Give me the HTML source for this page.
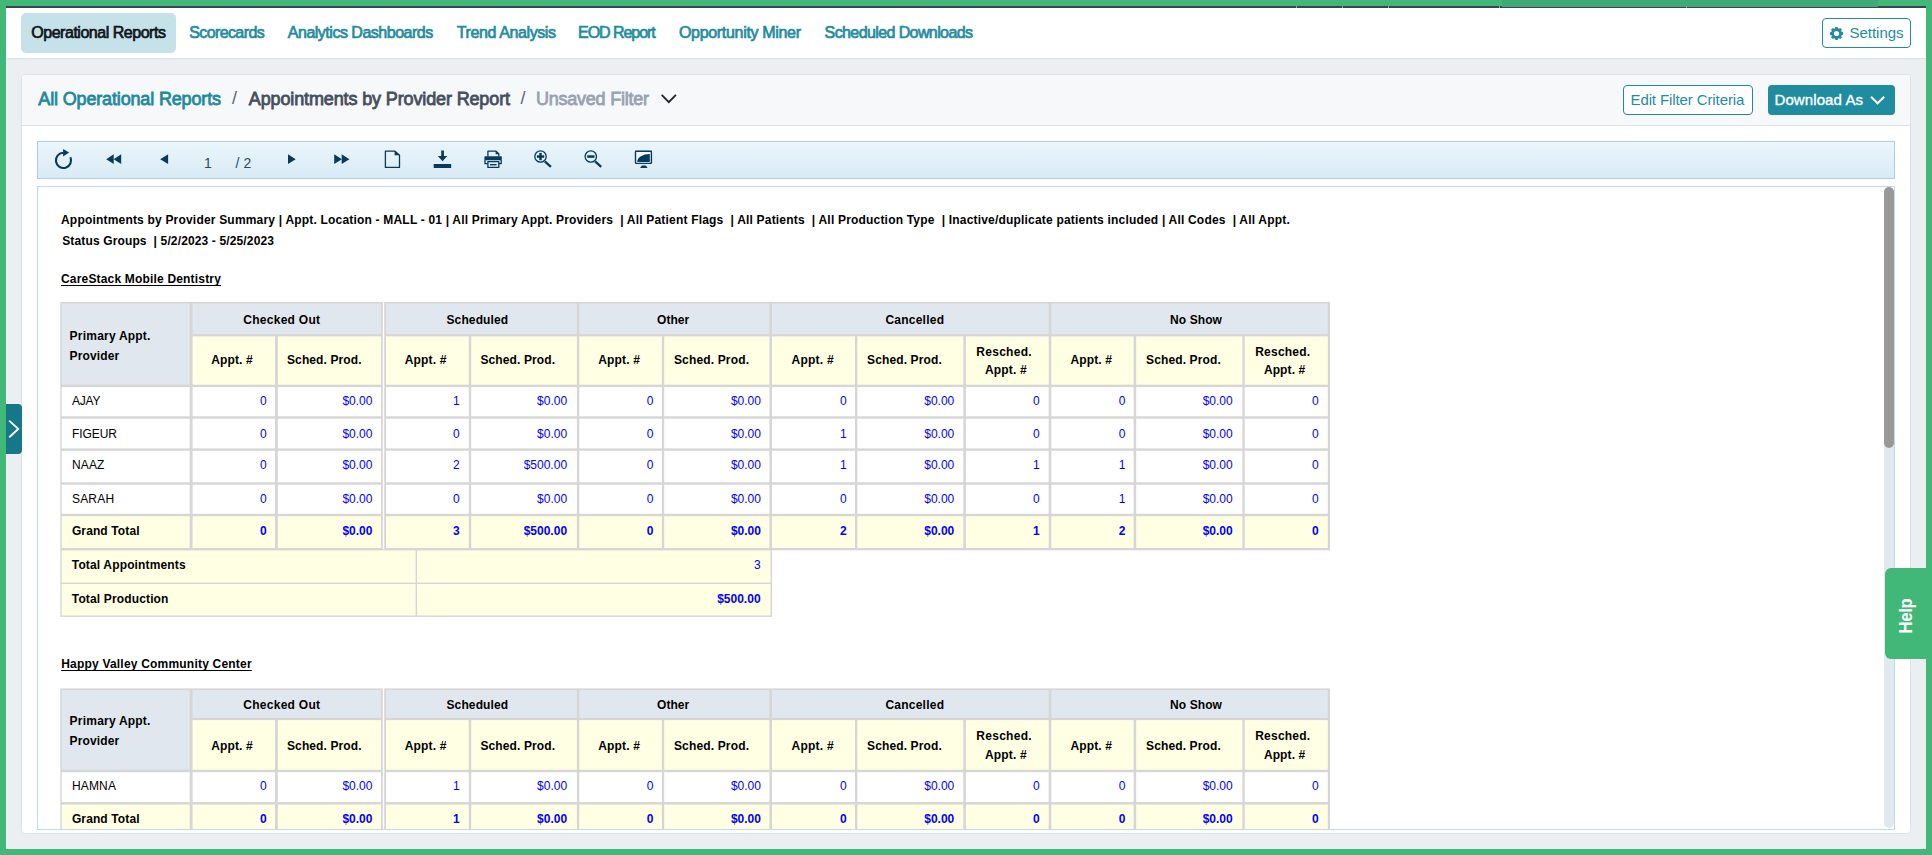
<!DOCTYPE html><html><head><meta charset="utf-8"><title>Appointments by Provider Report</title><style>
*{box-sizing:border-box;margin:0;padding:0}
html,body{width:1932px;height:855px;overflow:hidden}
body{background:#41b878;font-family:"Liberation Sans",sans-serif;position:relative}
.t{position:absolute;white-space:pre;line-height:1}
svg{position:absolute;overflow:visible}
#inner{position:absolute;left:6px;top:8px;width:1920px;height:841px;background:#eceff2}
#topline{position:absolute;left:6px;top:6px;width:1920px;height:2px;background:#3b4156}
#dgreen{position:absolute;left:1502px;top:0;width:376px;height:7px;background:#40aa76}
.tick{position:absolute;top:6px;width:1px;height:2px;background:#9aa1ad}
#nav{position:absolute;left:6px;top:8px;width:1920px;height:51px;background:#fff;border-bottom:1px solid #dbe1e8}
#pill{position:absolute;left:21px;top:13px;width:155px;height:40px;border-radius:5px;background:#c5e2e8}
#settings{position:absolute;left:1822px;top:18px;width:89px;height:30px;border:1px solid #1f8ca0;border-radius:4px;background:#fff}
#card{position:absolute;left:21px;top:74px;width:1890px;height:760px;border:1px solid #dde2e9;border-radius:4px;background:#fff}
#cardhdr{position:absolute;left:22px;top:75px;width:1888px;height:51px;background:#f7f8fa;border-bottom:1px solid #dde2e9;border-radius:3px 3px 0 0}
#editbtn{position:absolute;left:1623px;top:85px;width:130px;height:30px;border:1px solid #1f8ca0;border-radius:4px;background:#fff}
#dlbtn{position:absolute;left:1768px;top:85px;width:127px;height:30px;border-radius:4px;background:#1f8ca0}
#toolbar{position:absolute;left:37px;top:141px;width:1858px;height:38px;border:1px solid #a9d0e4;background:linear-gradient(#ebf5fb,#d9ebf5)}
#report{position:absolute;left:37px;top:186px;width:1858px;height:644px;border:1px solid #bddbea;background:#fff;overflow:hidden}
#sbtrack{position:absolute;left:1884px;top:187px;width:10px;height:641px;background:#e2e8ef;border-radius:5px}
#sbthumb{position:absolute;left:1884px;top:187px;width:10px;height:261px;background:#999;border-radius:5px}
#toggle{position:absolute;left:6px;top:404px;width:16px;height:50px;background:#157788;border-radius:0 4px 4px 0}
#help{position:absolute;left:1885px;top:568px;width:47px;height:91px;background:#41b878;border-radius:6px 0 0 6px}
#clip{position:absolute;left:38px;top:187px;width:1846px;height:642px;overflow:hidden}
#clipin{position:absolute;left:-38px;top:-187px;width:1932px;height:855px}
</style></head><body><div id="inner"></div><div id="topline"></div><div id="dgreen"></div><div class="tick" style="left:1296px"></div><div class="tick" style="left:1342px"></div><div class="tick" style="left:1388px"></div><div class="tick" style="left:1499px"></div><div class="tick" style="left:1686px"></div>
<div id="nav"></div><div id="pill"></div>
<div id="settings"></div>
<div id="card"></div><div id="cardhdr"></div>
<div id="editbtn"></div><div id="dlbtn"></div>
<div id="toolbar"></div>
<div id="report"></div><div id="sbtrack"></div><div id="sbthumb"></div>
<div id="clip"><div id="clipin"><svg width="1932" height="855" viewBox="0 0 1932 855" style="left:0;top:0"><rect x="60.30" y="301.90" width="1269.70" height="248.40" fill="#d6d6d6"/><rect x="61.70" y="303.50" width="128.00" height="81.20" fill="#e0e7ef"/><rect x="192.60" y="303.50" width="188.40" height="30.70" fill="#e0e7ef"/><rect x="386.00" y="303.50" width="190.90" height="30.70" fill="#e0e7ef"/><rect x="579.30" y="303.50" width="190.10" height="30.70" fill="#e0e7ef"/><rect x="772.00" y="303.50" width="276.70" height="30.70" fill="#e0e7ef"/><rect x="1051.30" y="303.50" width="276.50" height="30.70" fill="#e0e7ef"/><rect x="192.60" y="336.40" width="82.40" height="48.30" fill="#ffffe4"/><rect x="277.80" y="336.40" width="103.20" height="48.30" fill="#ffffe4"/><rect x="386.00" y="336.40" width="82.80" height="48.30" fill="#ffffe4"/><rect x="471.20" y="336.40" width="105.70" height="48.30" fill="#ffffe4"/><rect x="579.30" y="336.40" width="82.60" height="48.30" fill="#ffffe4"/><rect x="664.20" y="336.40" width="105.20" height="48.30" fill="#ffffe4"/><rect x="772.00" y="336.40" width="83.00" height="48.30" fill="#ffffe4"/><rect x="857.30" y="336.40" width="106.00" height="48.30" fill="#ffffe4"/><rect x="965.90" y="336.40" width="82.80" height="48.30" fill="#ffffe4"/><rect x="1051.30" y="336.40" width="82.30" height="48.30" fill="#ffffe4"/><rect x="1136.20" y="336.40" width="106.20" height="48.30" fill="#ffffe4"/><rect x="1244.70" y="336.40" width="83.10" height="48.30" fill="#ffffe4"/><rect x="61.70" y="387.10" width="128.00" height="29.20" fill="#fff"/><rect x="192.60" y="387.10" width="82.40" height="29.20" fill="#fff"/><rect x="277.80" y="387.10" width="103.20" height="29.20" fill="#fff"/><rect x="386.00" y="387.10" width="82.80" height="29.20" fill="#fff"/><rect x="471.20" y="387.10" width="105.70" height="29.20" fill="#fff"/><rect x="579.30" y="387.10" width="82.60" height="29.20" fill="#fff"/><rect x="664.20" y="387.10" width="105.20" height="29.20" fill="#fff"/><rect x="772.00" y="387.10" width="83.00" height="29.20" fill="#fff"/><rect x="857.30" y="387.10" width="106.00" height="29.20" fill="#fff"/><rect x="965.90" y="387.10" width="82.80" height="29.20" fill="#fff"/><rect x="1051.30" y="387.10" width="82.30" height="29.20" fill="#fff"/><rect x="1136.20" y="387.10" width="106.20" height="29.20" fill="#fff"/><rect x="1244.70" y="387.10" width="83.10" height="29.20" fill="#fff"/><rect x="61.70" y="418.70" width="128.00" height="29.70" fill="#fff"/><rect x="192.60" y="418.70" width="82.40" height="29.70" fill="#fff"/><rect x="277.80" y="418.70" width="103.20" height="29.70" fill="#fff"/><rect x="386.00" y="418.70" width="82.80" height="29.70" fill="#fff"/><rect x="471.20" y="418.70" width="105.70" height="29.70" fill="#fff"/><rect x="579.30" y="418.70" width="82.60" height="29.70" fill="#fff"/><rect x="664.20" y="418.70" width="105.20" height="29.70" fill="#fff"/><rect x="772.00" y="418.70" width="83.00" height="29.70" fill="#fff"/><rect x="857.30" y="418.70" width="106.00" height="29.70" fill="#fff"/><rect x="965.90" y="418.70" width="82.80" height="29.70" fill="#fff"/><rect x="1051.30" y="418.70" width="82.30" height="29.70" fill="#fff"/><rect x="1136.20" y="418.70" width="106.20" height="29.70" fill="#fff"/><rect x="1244.70" y="418.70" width="83.10" height="29.70" fill="#fff"/><rect x="61.70" y="450.80" width="128.00" height="31.50" fill="#fff"/><rect x="192.60" y="450.80" width="82.40" height="31.50" fill="#fff"/><rect x="277.80" y="450.80" width="103.20" height="31.50" fill="#fff"/><rect x="386.00" y="450.80" width="82.80" height="31.50" fill="#fff"/><rect x="471.20" y="450.80" width="105.70" height="31.50" fill="#fff"/><rect x="579.30" y="450.80" width="82.60" height="31.50" fill="#fff"/><rect x="664.20" y="450.80" width="105.20" height="31.50" fill="#fff"/><rect x="772.00" y="450.80" width="83.00" height="31.50" fill="#fff"/><rect x="857.30" y="450.80" width="106.00" height="31.50" fill="#fff"/><rect x="965.90" y="450.80" width="82.80" height="31.50" fill="#fff"/><rect x="1051.30" y="450.80" width="82.30" height="31.50" fill="#fff"/><rect x="1136.20" y="450.80" width="106.20" height="31.50" fill="#fff"/><rect x="1244.70" y="450.80" width="83.10" height="31.50" fill="#fff"/><rect x="61.70" y="484.70" width="128.00" height="29.10" fill="#fff"/><rect x="192.60" y="484.70" width="82.40" height="29.10" fill="#fff"/><rect x="277.80" y="484.70" width="103.20" height="29.10" fill="#fff"/><rect x="386.00" y="484.70" width="82.80" height="29.10" fill="#fff"/><rect x="471.20" y="484.70" width="105.70" height="29.10" fill="#fff"/><rect x="579.30" y="484.70" width="82.60" height="29.10" fill="#fff"/><rect x="664.20" y="484.70" width="105.20" height="29.10" fill="#fff"/><rect x="772.00" y="484.70" width="83.00" height="29.10" fill="#fff"/><rect x="857.30" y="484.70" width="106.00" height="29.10" fill="#fff"/><rect x="965.90" y="484.70" width="82.80" height="29.10" fill="#fff"/><rect x="1051.30" y="484.70" width="82.30" height="29.10" fill="#fff"/><rect x="1136.20" y="484.70" width="106.20" height="29.10" fill="#fff"/><rect x="1244.70" y="484.70" width="83.10" height="29.10" fill="#fff"/><rect x="61.70" y="516.20" width="128.00" height="31.80" fill="#ffffe4"/><rect x="192.60" y="516.20" width="82.40" height="31.80" fill="#ffffe4"/><rect x="277.80" y="516.20" width="103.20" height="31.80" fill="#ffffe4"/><rect x="386.00" y="516.20" width="82.80" height="31.80" fill="#ffffe4"/><rect x="471.20" y="516.20" width="105.70" height="31.80" fill="#ffffe4"/><rect x="579.30" y="516.20" width="82.60" height="31.80" fill="#ffffe4"/><rect x="664.20" y="516.20" width="105.20" height="31.80" fill="#ffffe4"/><rect x="772.00" y="516.20" width="83.00" height="31.80" fill="#ffffe4"/><rect x="857.30" y="516.20" width="106.00" height="31.80" fill="#ffffe4"/><rect x="965.90" y="516.20" width="82.80" height="31.80" fill="#ffffe4"/><rect x="1051.30" y="516.20" width="82.30" height="31.80" fill="#ffffe4"/><rect x="1136.20" y="516.20" width="106.20" height="31.80" fill="#ffffe4"/><rect x="1244.70" y="516.20" width="83.10" height="31.80" fill="#ffffe4"/><rect x="382.80" y="301.80" width="1.40" height="247.40" fill="#fff"/><rect x="60.30" y="549.80" width="711.70" height="67.10" fill="#d6d6d6"/><rect x="61.70" y="550.40" width="353.90" height="32.20" fill="#ffffe4"/><rect x="417.00" y="550.40" width="353.60" height="32.20" fill="#ffffe4"/><rect x="61.70" y="584.00" width="353.90" height="31.50" fill="#ffffe4"/><rect x="417.00" y="584.00" width="353.60" height="31.50" fill="#ffffe4"/><rect x="60.30" y="688.40" width="1269.70" height="152.70" fill="#d6d6d6"/><rect x="61.70" y="690.00" width="128.00" height="79.80" fill="#e0e7ef"/><rect x="192.60" y="690.00" width="188.40" height="27.90" fill="#e0e7ef"/><rect x="386.00" y="690.00" width="190.90" height="27.90" fill="#e0e7ef"/><rect x="579.30" y="690.00" width="190.10" height="27.90" fill="#e0e7ef"/><rect x="772.00" y="690.00" width="276.70" height="27.90" fill="#e0e7ef"/><rect x="1051.30" y="690.00" width="276.50" height="27.90" fill="#e0e7ef"/><rect x="192.60" y="720.10" width="82.40" height="49.70" fill="#ffffe4"/><rect x="277.80" y="720.10" width="103.20" height="49.70" fill="#ffffe4"/><rect x="386.00" y="720.10" width="82.80" height="49.70" fill="#ffffe4"/><rect x="471.20" y="720.10" width="105.70" height="49.70" fill="#ffffe4"/><rect x="579.30" y="720.10" width="82.60" height="49.70" fill="#ffffe4"/><rect x="664.20" y="720.10" width="105.20" height="49.70" fill="#ffffe4"/><rect x="772.00" y="720.10" width="83.00" height="49.70" fill="#ffffe4"/><rect x="857.30" y="720.10" width="106.00" height="49.70" fill="#ffffe4"/><rect x="965.90" y="720.10" width="82.80" height="49.70" fill="#ffffe4"/><rect x="1051.30" y="720.10" width="82.30" height="49.70" fill="#ffffe4"/><rect x="1136.20" y="720.10" width="106.20" height="49.70" fill="#ffffe4"/><rect x="1244.70" y="720.10" width="83.10" height="49.70" fill="#ffffe4"/><rect x="61.70" y="772.20" width="128.00" height="29.90" fill="#fff"/><rect x="192.60" y="772.20" width="82.40" height="29.90" fill="#fff"/><rect x="277.80" y="772.20" width="103.20" height="29.90" fill="#fff"/><rect x="386.00" y="772.20" width="82.80" height="29.90" fill="#fff"/><rect x="471.20" y="772.20" width="105.70" height="29.90" fill="#fff"/><rect x="579.30" y="772.20" width="82.60" height="29.90" fill="#fff"/><rect x="664.20" y="772.20" width="105.20" height="29.90" fill="#fff"/><rect x="772.00" y="772.20" width="83.00" height="29.90" fill="#fff"/><rect x="857.30" y="772.20" width="106.00" height="29.90" fill="#fff"/><rect x="965.90" y="772.20" width="82.80" height="29.90" fill="#fff"/><rect x="1051.30" y="772.20" width="82.30" height="29.90" fill="#fff"/><rect x="1136.20" y="772.20" width="106.20" height="29.90" fill="#fff"/><rect x="1244.70" y="772.20" width="83.10" height="29.90" fill="#fff"/><rect x="61.70" y="804.50" width="128.00" height="34.40" fill="#ffffe4"/><rect x="192.60" y="804.50" width="82.40" height="34.40" fill="#ffffe4"/><rect x="277.80" y="804.50" width="103.20" height="34.40" fill="#ffffe4"/><rect x="386.00" y="804.50" width="82.80" height="34.40" fill="#ffffe4"/><rect x="471.20" y="804.50" width="105.70" height="34.40" fill="#ffffe4"/><rect x="579.30" y="804.50" width="82.60" height="34.40" fill="#ffffe4"/><rect x="664.20" y="804.50" width="105.20" height="34.40" fill="#ffffe4"/><rect x="772.00" y="804.50" width="83.00" height="34.40" fill="#ffffe4"/><rect x="857.30" y="804.50" width="106.00" height="34.40" fill="#ffffe4"/><rect x="965.90" y="804.50" width="82.80" height="34.40" fill="#ffffe4"/><rect x="1051.30" y="804.50" width="82.30" height="34.40" fill="#ffffe4"/><rect x="1136.20" y="804.50" width="106.20" height="34.40" fill="#ffffe4"/><rect x="1244.70" y="804.50" width="83.10" height="34.40" fill="#ffffe4"/><rect x="382.80" y="688.30" width="1.40" height="152.90" fill="#fff"/></svg><div class="t" style="left:61.00px;top:214px;font-size:12px;color:#000;font-weight:bold;letter-spacing:0.193px;">Appointments by Provider Summary | Appt. Location - MALL - 01 | All Primary Appt. Providers  | All Patient Flags  | All Patients  | All Production Type  | Inactive/duplicate patients included | All Codes  | All Appt.</div>
<div class="t" style="left:62.20px;top:235px;font-size:12px;color:#000;font-weight:bold;letter-spacing:0.138px;">Status Groups  | 5/2/2023 - 5/25/2023</div>
<div class="t" style="left:61.00px;top:273px;font-size:12px;color:#000;font-weight:bold;letter-spacing:0.179px;text-decoration:underline;text-underline-offset:1.5px;text-decoration-thickness:1px;">CareStack Mobile Dentistry</div>
<div class="t" style="left:243.30px;top:314px;font-size:12px;color:#000;font-weight:bold;letter-spacing:0.268px;">Checked Out</div>
<div class="t" style="left:446.50px;top:314px;font-size:12px;color:#000;font-weight:bold;letter-spacing:0.118px;">Scheduled</div>
<div class="t" style="left:657.00px;top:314px;font-size:12px;color:#000;font-weight:bold;letter-spacing:0.064px;">Other</div>
<div class="t" style="left:885.40px;top:314px;font-size:12px;color:#000;font-weight:bold;letter-spacing:0.241px;">Cancelled</div>
<div class="t" style="left:1170.00px;top:314px;font-size:12px;color:#000;font-weight:bold;letter-spacing:0.101px;">No Show</div>
<div class="t" style="left:69.60px;top:330px;font-size:12px;color:#000;font-weight:bold;letter-spacing:0.215px;">Primary Appt.</div>
<div class="t" style="left:69.60px;top:350px;font-size:12px;color:#000;font-weight:bold;letter-spacing:0.140px;">Provider</div>
<div class="t" style="left:211.30px;top:354px;font-size:12px;color:#000;font-weight:bold;letter-spacing:0.117px;">Appt. #</div>
<div class="t" style="left:404.80px;top:354px;font-size:12px;color:#000;font-weight:bold;letter-spacing:0.150px;">Appt. #</div>
<div class="t" style="left:598.30px;top:354px;font-size:12px;color:#000;font-weight:bold;letter-spacing:0.150px;">Appt. #</div>
<div class="t" style="left:791.50px;top:354px;font-size:12px;color:#000;font-weight:bold;letter-spacing:0.234px;">Appt. #</div>
<div class="t" style="left:1070.40px;top:354px;font-size:12px;color:#000;font-weight:bold;letter-spacing:0.150px;">Appt. #</div>
<div class="t" style="left:287.00px;top:354px;font-size:12px;color:#000;font-weight:bold;letter-spacing:0.107px;">Sched. Prod.</div>
<div class="t" style="left:480.40px;top:354px;font-size:12px;color:#000;font-weight:bold;letter-spacing:0.125px;">Sched. Prod.</div>
<div class="t" style="left:673.90px;top:354px;font-size:12px;color:#000;font-weight:bold;letter-spacing:0.161px;">Sched. Prod.</div>
<div class="t" style="left:867.00px;top:354px;font-size:12px;color:#000;font-weight:bold;letter-spacing:0.134px;">Sched. Prod.</div>
<div class="t" style="left:1146.10px;top:354px;font-size:12px;color:#000;font-weight:bold;letter-spacing:0.116px;">Sched. Prod.</div>
<div class="t" style="left:976.30px;top:346px;font-size:12px;color:#000;font-weight:bold;letter-spacing:0.282px;">Resched.</div>
<div class="t" style="left:985.00px;top:364px;font-size:12px;color:#000;font-weight:bold;letter-spacing:0.167px;">Appt. #</div>
<div class="t" style="left:1255.20px;top:346px;font-size:12px;color:#000;font-weight:bold;letter-spacing:0.225px;">Resched.</div>
<div class="t" style="left:1263.90px;top:364px;font-size:12px;color:#000;font-weight:bold;letter-spacing:0.117px;">Appt. #</div>
<div class="t" style="left:71.90px;top:395px;font-size:12px;color:#000;letter-spacing:-0.140px;">AJAY</div>
<div class="t" style="left:259.89px;top:395px;font-size:12px;color:#0000ff;">0</div>
<div class="t" style="left:342.44px;top:395px;font-size:12px;color:#0000ff;">$0.00</div>
<div class="t" style="left:452.99px;top:395px;font-size:12px;color:#0000ff;">1</div>
<div class="t" style="left:537.04px;top:395px;font-size:12px;color:#0000ff;">$0.00</div>
<div class="t" style="left:646.79px;top:395px;font-size:12px;color:#0000ff;">0</div>
<div class="t" style="left:730.94px;top:395px;font-size:12px;color:#0000ff;">$0.00</div>
<div class="t" style="left:840.09px;top:395px;font-size:12px;color:#0000ff;">0</div>
<div class="t" style="left:924.24px;top:395px;font-size:12px;color:#0000ff;">$0.00</div>
<div class="t" style="left:1033.09px;top:395px;font-size:12px;color:#0000ff;">0</div>
<div class="t" style="left:1118.69px;top:395px;font-size:12px;color:#0000ff;">0</div>
<div class="t" style="left:1202.64px;top:395px;font-size:12px;color:#0000ff;">$0.00</div>
<div class="t" style="left:1312.09px;top:395px;font-size:12px;color:#0000ff;">0</div>
<div class="t" style="left:71.90px;top:428px;font-size:12px;color:#000;letter-spacing:-0.056px;">FIGEUR</div>
<div class="t" style="left:259.89px;top:428px;font-size:12px;color:#0000ff;">0</div>
<div class="t" style="left:342.44px;top:428px;font-size:12px;color:#0000ff;">$0.00</div>
<div class="t" style="left:452.99px;top:428px;font-size:12px;color:#0000ff;">0</div>
<div class="t" style="left:537.04px;top:428px;font-size:12px;color:#0000ff;">$0.00</div>
<div class="t" style="left:646.79px;top:428px;font-size:12px;color:#0000ff;">0</div>
<div class="t" style="left:730.94px;top:428px;font-size:12px;color:#0000ff;">$0.00</div>
<div class="t" style="left:840.09px;top:428px;font-size:12px;color:#0000ff;">1</div>
<div class="t" style="left:924.24px;top:428px;font-size:12px;color:#0000ff;">$0.00</div>
<div class="t" style="left:1033.09px;top:428px;font-size:12px;color:#0000ff;">0</div>
<div class="t" style="left:1118.69px;top:428px;font-size:12px;color:#0000ff;">0</div>
<div class="t" style="left:1202.64px;top:428px;font-size:12px;color:#0000ff;">$0.00</div>
<div class="t" style="left:1312.09px;top:428px;font-size:12px;color:#0000ff;">0</div>
<div class="t" style="left:71.90px;top:459px;font-size:12px;color:#000;letter-spacing:0.171px;">NAAZ</div>
<div class="t" style="left:259.89px;top:459px;font-size:12px;color:#0000ff;">0</div>
<div class="t" style="left:342.44px;top:459px;font-size:12px;color:#0000ff;">$0.00</div>
<div class="t" style="left:452.99px;top:459px;font-size:12px;color:#0000ff;">2</div>
<div class="t" style="left:523.68px;top:459px;font-size:12px;color:#0000ff;">$500.00</div>
<div class="t" style="left:646.79px;top:459px;font-size:12px;color:#0000ff;">0</div>
<div class="t" style="left:730.94px;top:459px;font-size:12px;color:#0000ff;">$0.00</div>
<div class="t" style="left:840.09px;top:459px;font-size:12px;color:#0000ff;">1</div>
<div class="t" style="left:924.24px;top:459px;font-size:12px;color:#0000ff;">$0.00</div>
<div class="t" style="left:1033.09px;top:459px;font-size:12px;color:#0000ff;">1</div>
<div class="t" style="left:1118.69px;top:459px;font-size:12px;color:#0000ff;">1</div>
<div class="t" style="left:1202.64px;top:459px;font-size:12px;color:#0000ff;">$0.00</div>
<div class="t" style="left:1312.09px;top:459px;font-size:12px;color:#0000ff;">0</div>
<div class="t" style="left:71.90px;top:493px;font-size:12px;color:#000;letter-spacing:0.231px;">SARAH</div>
<div class="t" style="left:259.89px;top:493px;font-size:12px;color:#0000ff;">0</div>
<div class="t" style="left:342.44px;top:493px;font-size:12px;color:#0000ff;">$0.00</div>
<div class="t" style="left:452.99px;top:493px;font-size:12px;color:#0000ff;">0</div>
<div class="t" style="left:537.04px;top:493px;font-size:12px;color:#0000ff;">$0.00</div>
<div class="t" style="left:646.79px;top:493px;font-size:12px;color:#0000ff;">0</div>
<div class="t" style="left:730.94px;top:493px;font-size:12px;color:#0000ff;">$0.00</div>
<div class="t" style="left:840.09px;top:493px;font-size:12px;color:#0000ff;">0</div>
<div class="t" style="left:924.24px;top:493px;font-size:12px;color:#0000ff;">$0.00</div>
<div class="t" style="left:1033.09px;top:493px;font-size:12px;color:#0000ff;">0</div>
<div class="t" style="left:1118.69px;top:493px;font-size:12px;color:#0000ff;">1</div>
<div class="t" style="left:1202.64px;top:493px;font-size:12px;color:#0000ff;">$0.00</div>
<div class="t" style="left:1312.09px;top:493px;font-size:12px;color:#0000ff;">0</div>
<div class="t" style="left:71.90px;top:525px;font-size:12px;color:#000;font-weight:bold;letter-spacing:0.118px;">Grand Total</div>
<div class="t" style="left:259.89px;top:525px;font-size:12px;color:#0000ff;font-weight:bold;">0</div>
<div class="t" style="left:342.44px;top:525px;font-size:12px;color:#0000ff;font-weight:bold;">$0.00</div>
<div class="t" style="left:452.99px;top:525px;font-size:12px;color:#0000ff;font-weight:bold;">3</div>
<div class="t" style="left:523.68px;top:525px;font-size:12px;color:#0000ff;font-weight:bold;">$500.00</div>
<div class="t" style="left:646.79px;top:525px;font-size:12px;color:#0000ff;font-weight:bold;">0</div>
<div class="t" style="left:730.94px;top:525px;font-size:12px;color:#0000ff;font-weight:bold;">$0.00</div>
<div class="t" style="left:840.09px;top:525px;font-size:12px;color:#0000ff;font-weight:bold;">2</div>
<div class="t" style="left:924.24px;top:525px;font-size:12px;color:#0000ff;font-weight:bold;">$0.00</div>
<div class="t" style="left:1033.09px;top:525px;font-size:12px;color:#0000ff;font-weight:bold;">1</div>
<div class="t" style="left:1118.69px;top:525px;font-size:12px;color:#0000ff;font-weight:bold;">2</div>
<div class="t" style="left:1202.64px;top:525px;font-size:12px;color:#0000ff;font-weight:bold;">$0.00</div>
<div class="t" style="left:1312.09px;top:525px;font-size:12px;color:#0000ff;font-weight:bold;">0</div>
<div class="t" style="left:71.80px;top:559px;font-size:12px;color:#000;font-weight:bold;letter-spacing:0.150px;">Total Appointments</div>
<div class="t" style="left:753.89px;top:559px;font-size:12px;color:#0000ff;">3</div>
<div class="t" style="left:71.80px;top:593px;font-size:12px;color:#000;font-weight:bold;letter-spacing:0.146px;">Total Production</div>
<div class="t" style="left:717.18px;top:593px;font-size:12px;color:#0000ff;font-weight:bold;">$500.00</div>
<div class="t" style="left:61.20px;top:658px;font-size:12px;color:#000;font-weight:bold;letter-spacing:0.202px;text-decoration:underline;text-underline-offset:1.5px;text-decoration-thickness:1px;">Happy Valley Community Center</div>
<div class="t" style="left:243.30px;top:699px;font-size:12px;color:#000;font-weight:bold;letter-spacing:0.268px;">Checked Out</div>
<div class="t" style="left:446.50px;top:699px;font-size:12px;color:#000;font-weight:bold;letter-spacing:0.118px;">Scheduled</div>
<div class="t" style="left:657.00px;top:699px;font-size:12px;color:#000;font-weight:bold;letter-spacing:0.064px;">Other</div>
<div class="t" style="left:885.40px;top:699px;font-size:12px;color:#000;font-weight:bold;letter-spacing:0.241px;">Cancelled</div>
<div class="t" style="left:1170.00px;top:699px;font-size:12px;color:#000;font-weight:bold;letter-spacing:0.101px;">No Show</div>
<div class="t" style="left:69.60px;top:715px;font-size:12px;color:#000;font-weight:bold;letter-spacing:0.215px;">Primary Appt.</div>
<div class="t" style="left:69.60px;top:735px;font-size:12px;color:#000;font-weight:bold;letter-spacing:0.140px;">Provider</div>
<div class="t" style="left:211.30px;top:740px;font-size:12px;color:#000;font-weight:bold;letter-spacing:0.117px;">Appt. #</div>
<div class="t" style="left:404.80px;top:740px;font-size:12px;color:#000;font-weight:bold;letter-spacing:0.150px;">Appt. #</div>
<div class="t" style="left:598.30px;top:740px;font-size:12px;color:#000;font-weight:bold;letter-spacing:0.150px;">Appt. #</div>
<div class="t" style="left:791.50px;top:740px;font-size:12px;color:#000;font-weight:bold;letter-spacing:0.234px;">Appt. #</div>
<div class="t" style="left:1070.40px;top:740px;font-size:12px;color:#000;font-weight:bold;letter-spacing:0.150px;">Appt. #</div>
<div class="t" style="left:287.00px;top:740px;font-size:12px;color:#000;font-weight:bold;letter-spacing:0.107px;">Sched. Prod.</div>
<div class="t" style="left:480.40px;top:740px;font-size:12px;color:#000;font-weight:bold;letter-spacing:0.125px;">Sched. Prod.</div>
<div class="t" style="left:673.90px;top:740px;font-size:12px;color:#000;font-weight:bold;letter-spacing:0.161px;">Sched. Prod.</div>
<div class="t" style="left:867.00px;top:740px;font-size:12px;color:#000;font-weight:bold;letter-spacing:0.134px;">Sched. Prod.</div>
<div class="t" style="left:1146.10px;top:740px;font-size:12px;color:#000;font-weight:bold;letter-spacing:0.116px;">Sched. Prod.</div>
<div class="t" style="left:976.30px;top:730px;font-size:12px;color:#000;font-weight:bold;letter-spacing:0.282px;">Resched.</div>
<div class="t" style="left:985.00px;top:749px;font-size:12px;color:#000;font-weight:bold;letter-spacing:0.167px;">Appt. #</div>
<div class="t" style="left:1255.20px;top:730px;font-size:12px;color:#000;font-weight:bold;letter-spacing:0.225px;">Resched.</div>
<div class="t" style="left:1263.90px;top:749px;font-size:12px;color:#000;font-weight:bold;letter-spacing:0.117px;">Appt. #</div>
<div class="t" style="left:71.90px;top:780px;font-size:12px;color:#000;letter-spacing:0.165px;">HAMNA</div>
<div class="t" style="left:259.89px;top:780px;font-size:12px;color:#0000ff;">0</div>
<div class="t" style="left:342.44px;top:780px;font-size:12px;color:#0000ff;">$0.00</div>
<div class="t" style="left:452.99px;top:780px;font-size:12px;color:#0000ff;">1</div>
<div class="t" style="left:537.04px;top:780px;font-size:12px;color:#0000ff;">$0.00</div>
<div class="t" style="left:646.79px;top:780px;font-size:12px;color:#0000ff;">0</div>
<div class="t" style="left:730.94px;top:780px;font-size:12px;color:#0000ff;">$0.00</div>
<div class="t" style="left:840.09px;top:780px;font-size:12px;color:#0000ff;">0</div>
<div class="t" style="left:924.24px;top:780px;font-size:12px;color:#0000ff;">$0.00</div>
<div class="t" style="left:1033.09px;top:780px;font-size:12px;color:#0000ff;">0</div>
<div class="t" style="left:1118.69px;top:780px;font-size:12px;color:#0000ff;">0</div>
<div class="t" style="left:1202.64px;top:780px;font-size:12px;color:#0000ff;">$0.00</div>
<div class="t" style="left:1312.09px;top:780px;font-size:12px;color:#0000ff;">0</div>
<div class="t" style="left:71.90px;top:813px;font-size:12px;color:#000;font-weight:bold;letter-spacing:0.118px;">Grand Total</div>
<div class="t" style="left:259.89px;top:813px;font-size:12px;color:#0000ff;font-weight:bold;">0</div>
<div class="t" style="left:342.44px;top:813px;font-size:12px;color:#0000ff;font-weight:bold;">$0.00</div>
<div class="t" style="left:452.99px;top:813px;font-size:12px;color:#0000ff;font-weight:bold;">1</div>
<div class="t" style="left:537.04px;top:813px;font-size:12px;color:#0000ff;font-weight:bold;">$0.00</div>
<div class="t" style="left:646.79px;top:813px;font-size:12px;color:#0000ff;font-weight:bold;">0</div>
<div class="t" style="left:730.94px;top:813px;font-size:12px;color:#0000ff;font-weight:bold;">$0.00</div>
<div class="t" style="left:840.09px;top:813px;font-size:12px;color:#0000ff;font-weight:bold;">0</div>
<div class="t" style="left:924.24px;top:813px;font-size:12px;color:#0000ff;font-weight:bold;">$0.00</div>
<div class="t" style="left:1033.09px;top:813px;font-size:12px;color:#0000ff;font-weight:bold;">0</div>
<div class="t" style="left:1118.69px;top:813px;font-size:12px;color:#0000ff;font-weight:bold;">0</div>
<div class="t" style="left:1202.64px;top:813px;font-size:12px;color:#0000ff;font-weight:bold;">$0.00</div>
<div class="t" style="left:1312.09px;top:813px;font-size:12px;color:#0000ff;font-weight:bold;">0</div></div></div>
<svg width="1932" height="855" viewBox="0 0 1932 855" style="left:0;top:0"><path d="M63.50 152.80 A7.6 7.6 0 1 0 70.39 157.19" fill="none" stroke="#073a5b" stroke-width="2.1"/><path d="M63.1 148.9 L69.1 152.6 L63.1 156.6 Z" fill="#073a5b"/><path d="M106.2 159.15 L113.7 154.2 L113.7 164.1 Z" fill="#073a5b"/><path d="M113.6 159.15 L121.2 154.2 L121.2 164.1 Z" fill="#073a5b"/><path d="M160.2 159.15 L168.1 154.2 L168.1 164.1 Z" fill="#073a5b"/><path d="M295.7 159.15 L288.0 154.2 L288.0 164.1 Z" fill="#073a5b"/><path d="M341.9 159.15 L334.2 154.2 L334.2 164.1 Z" fill="#073a5b"/><path d="M349.4 159.15 L341.7 154.2 L341.7 164.1 Z" fill="#073a5b"/><path d="M385.4 151.2 H395 L399.5 155.2 V167.4 H385.4 Z" fill="none" stroke="#073a5b" stroke-width="1.3" stroke-linejoin="round"/><path d="M394.6 150.8 L400 155.3 H394.6 Z" fill="#073a5b"/><path d="M441.2 150.6 H443.9 V156 H447.3 L442.55 161.2 L437.8 156 H441.2 Z" fill="#073a5b"/><rect x="433.7" y="164" width="17.5" height="4" fill="#073a5b"/><path d="M487.9 156.6 V151.2 H496 L498.8 153.8 V156.6" fill="none" stroke="#073a5b" stroke-width="1.3" stroke-linejoin="round"/><path d="M495.6 150.8 L499.3 154.3 H495.6 Z" fill="#073a5b"/><rect x="484.4" y="156.3" width="17.4" height="3.9" rx="0.8" fill="#073a5b"/><path d="M485 160 V163.6 H487.6 M498.9 163.6 H501.2 V160" fill="none" stroke="#073a5b" stroke-width="1.3"/><path d="M487.9 161.6 H498.8 V167.4 H487.9 Z" fill="none" stroke="#073a5b" stroke-width="1.3" stroke-linejoin="round"/><rect x="490" y="164" width="6.6" height="1.4" fill="#073a5b"/><circle cx="540.5" cy="156.5" r="5.7" fill="none" stroke="#073a5b" stroke-width="1.3"/><path d="M544.8 161.3 L550.9 166.8" stroke="#073a5b" stroke-width="2.3" stroke-linecap="butt"/><rect x="536.9" y="155.3" width="7.3" height="2.5" fill="#073a5b"/><rect x="539.25" y="152.9" width="2.5" height="7.3" fill="#073a5b"/><circle cx="590.8" cy="156.5" r="5.7" fill="none" stroke="#073a5b" stroke-width="1.3"/><path d="M595.0999999999999 161.3 L601.1999999999999 166.8" stroke="#073a5b" stroke-width="2.3" stroke-linecap="butt"/><rect x="587.1999999999999" y="155.3" width="7.3" height="2.5" fill="#073a5b"/><rect x="635.5" y="151.4" width="15.9" height="12" rx="0.6" fill="#f3fafd" stroke="#073a5b" stroke-width="1.4"/><rect x="635" y="150.6" width="16.9" height="1.4" fill="#073a5b"/><path d="M637.2 162 H649.8 V153.9 A12.6 8.1 0 0 0 637.2 162 Z" fill="#073a5b"/><path d="M641.8 165.4 H645.9 L647.6 168 H640.1 Z" fill="#073a5b"/><path d="M661.7 94.8 L668.8 102.2 L675.9 94.8" fill="none" stroke="#1d232b" stroke-width="1.8"/><path d="M1871 96.8 L1877.6 103.3 L1884.2 96.8" fill="none" stroke="#fff" stroke-width="2"/><path d="M1841.72 32.12 L1843.09 32.30 L1843.09 34.70 L1841.72 34.88 L1841.17 36.21 L1842.01 37.31 L1840.31 39.01 L1839.21 38.17 L1837.88 38.72 L1837.70 40.09 L1835.30 40.09 L1835.12 38.72 L1833.79 38.17 L1832.69 39.01 L1830.99 37.31 L1831.83 36.21 L1831.28 34.88 L1829.91 34.70 L1829.91 32.30 L1831.28 32.12 L1831.83 30.79 L1830.99 29.69 L1832.69 27.99 L1833.79 28.83 L1835.12 28.28 L1835.30 26.91 L1837.70 26.91 L1837.88 28.28 L1839.21 28.83 L1840.31 27.99 L1842.01 29.69 L1841.17 30.79 Z M1839.10 33.50 A2.6 2.6 0 1 0 1833.90 33.50 A2.6 2.6 0 1 0 1839.10 33.50 Z" fill="#1f8ca0" fill-rule="evenodd"/></svg>
<div id="toggle"></div><div id="help"></div>
<svg width="1932" height="855" viewBox="0 0 1932 855" style="left:0;top:0;pointer-events:none"><path d="M9.2 420.6 L18.2 428.9 L9.2 437.3" fill="none" stroke="#fff" stroke-width="1.9"/></svg>
<div class="t" style="left:1905.6px;top:615.6px;font-size:18.5px;font-weight:bold;color:#fff;letter-spacing:-0.3px;transform:translate(-50%,-50%) rotate(-90deg) scaleX(0.9)">Help</div>
<div class="t" style="left:31.30px;top:25px;font-size:16px;color:#10141c;letter-spacing:-0.477px;-webkit-text-stroke:0.7px #10141c;">Operational Reports</div>
<div class="t" style="left:189.20px;top:25px;font-size:16px;color:#1f8ca0;letter-spacing:-0.602px;-webkit-text-stroke:0.7px #1f8ca0;">Scorecards</div>
<div class="t" style="left:287.80px;top:25px;font-size:16px;color:#1f8ca0;letter-spacing:-0.492px;-webkit-text-stroke:0.7px #1f8ca0;">Analytics Dashboards</div>
<div class="t" style="left:456.80px;top:25px;font-size:16px;color:#1f8ca0;letter-spacing:-0.396px;-webkit-text-stroke:0.7px #1f8ca0;">Trend Analysis</div>
<div class="t" style="left:578.00px;top:25px;font-size:16px;color:#1f8ca0;letter-spacing:-1.044px;-webkit-text-stroke:0.7px #1f8ca0;">EOD Report</div>
<div class="t" style="left:679.00px;top:25px;font-size:16px;color:#1f8ca0;letter-spacing:-0.321px;-webkit-text-stroke:0.7px #1f8ca0;">Opportunity Miner</div>
<div class="t" style="left:824.60px;top:25px;font-size:16px;color:#1f8ca0;letter-spacing:-0.601px;-webkit-text-stroke:0.7px #1f8ca0;">Scheduled Downloads</div>
<div class="t" style="left:1849.50px;top:25px;font-size:15px;color:#1f8ca0;letter-spacing:-0.015px;">Settings</div>
<div class="t" style="left:38.30px;top:90px;font-size:18px;color:#1f8a9f;letter-spacing:-0.154px;-webkit-text-stroke:0.8px #1f8a9f;">All Operational Reports</div>
<div class="t" style="left:232.00px;top:89px;font-size:18px;color:#5a6572;">/</div>
<div class="t" style="left:248.80px;top:90px;font-size:18px;color:#454f5e;letter-spacing:-0.131px;-webkit-text-stroke:0.8px #454f5e;">Appointments by Provider Report</div>
<div class="t" style="left:520.50px;top:89px;font-size:18px;color:#5a6572;">/</div>
<div class="t" style="left:536.00px;top:90px;font-size:18px;color:#97a3b2;letter-spacing:-0.235px;-webkit-text-stroke:0.8px #97a3b2;">Unsaved Filter</div>
<div class="t" style="left:1630.50px;top:92px;font-size:15px;color:#1f8ca0;letter-spacing:-0.106px;">Edit Filter Criteria</div>
<div class="t" style="left:1774.50px;top:92px;font-size:15px;color:#fff;letter-spacing:0.094px;-webkit-text-stroke:0.35px #fff;">Download As</div>
<div class="t" style="left:204.00px;top:156px;font-size:14px;color:#2e4a5e;">1</div>
<div class="t" style="left:235.50px;top:156px;font-size:14px;color:#2e4a5e;letter-spacing:0.104px;">/ 2</div></body></html>
